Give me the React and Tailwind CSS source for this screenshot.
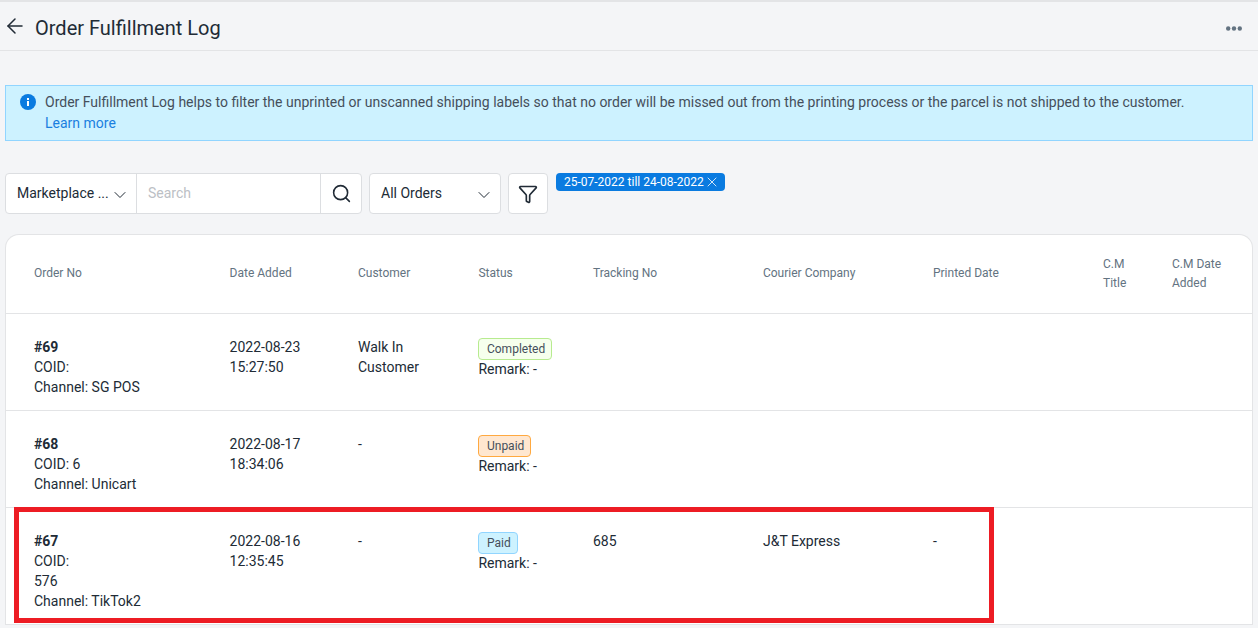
import { ArrowLeft, ChevronDown, Filter, Search, X } from "lucide-react";

const columns = "grid grid-cols-[223.6px_128.4px_120.4px_114.6px_170px_170px_170px_69px_1fr]";

const badgeStyles = {
  Completed: "border-[#b7eb8f] bg-[#f6ffed]",
  Unpaid: "border-[#ffa940] bg-[#ffe7d0]",
  Paid: "border-[#91d5ff] bg-[#cdf2ff]",
};

const orders = [
  {
    id: "#69",
    coid: ["COID:"],
    channel: "Channel: SG POS",
    date: "2022-08-23",
    time: "15:27:50",
    customer: ["Walk In", "Customer"],
    status: "Completed",
    height: "h-[97px]",
  },
  {
    id: "#68",
    coid: ["COID: 6"],
    channel: "Channel: Unicart",
    date: "2022-08-17",
    time: "18:34:06",
    customer: ["-"],
    status: "Unpaid",
    height: "h-[97px]",
  },
  {
    id: "#67",
    coid: ["COID:", "576"],
    channel: "Channel: TikTok2",
    date: "2022-08-16",
    time: "12:35:45",
    customer: ["-"],
    status: "Paid",
    tracking: "685",
    courier: "J&T Express",
    printed: "-",
    height: "h-[117px]",
  },
];

const InfoIcon = () => (
  <svg viewBox="0 0 16 16" className="mt-[2px] h-4 w-4 shrink-0" aria-hidden="true">
    <circle cx="8" cy="8" r="8" fill="#0a7be0" />
    <rect x="7" y="7" width="2" height="5" fill="#fff" />
    <rect x="7" y="4" width="2" height="2" fill="#fff" />
  </svg>
);

const DotsIcon = () => (
  <svg viewBox="0 0 16 5" className="ml-auto h-[5px] w-4" aria-hidden="true">
    <circle cx="2.2" cy="2.5" r="2.2" fill="#637381" />
    <circle cx="8" cy="2.5" r="2.2" fill="#637381" />
    <circle cx="13.8" cy="2.5" r="2.2" fill="#637381" />
  </svg>
);

const App = () => {
  return (
    <div className="relative h-[628px] w-[1258px] overflow-hidden bg-[#f4f5f7] font-['Roboto',sans-serif] text-sm text-[#212b36]">
      <header className="flex h-[51px] items-center border-y border-t-2 border-[#e3e4e6] pt-1 pr-4 pl-[3px]">
        <ArrowLeft className="h-6 w-6 -translate-y-[2px]" strokeWidth={1.5} />
        <h1 className="ml-2 text-xl text-[#212b36]">Order Fulfillment Log</h1>
        <DotsIcon />
      </header>

      <div className="mx-[5px] mt-[34px] flex h-[56px] gap-[9px] border border-[#91d5ff] bg-[#cdf2ff] pt-[6px] pl-[14px] leading-[21px]">
        <InfoIcon />
        <div className="text-[#454f5b]">
          <p>
            Order Fulfillment Log helps to filter the unprinted or unscanned shipping labels so
            that no order will be missed out from the printing process or the parcel is not shipped
            to the customer.
          </p>
          <p className="text-[#1a7fe0]">Learn more</p>
        </div>
      </div>

      <div className="mt-8 flex h-[41px] items-start pl-[5px]">
        <div className="flex h-[41px] w-[357px] overflow-hidden rounded border border-[#dcdee1] bg-white">
          <div className="flex w-[131px] items-center justify-between border-r border-[#dcdee1] pr-[6px] pb-px pl-[11px]">
            <span>Marketplace ...</span>
            <ChevronDown className="h-5 w-5 translate-y-[2px]" strokeWidth={1.2} />
          </div>
          <div className="flex flex-1 items-center border-r border-[#dcdee1] pb-px pl-[11px] text-[#bcc0c5]">
            Search
          </div>
          <div className="flex w-[40px] items-center justify-center">
            <Search className="h-[21px] w-[21px]" strokeWidth={1.8} />
          </div>
        </div>
        <div className="ml-[7px] flex h-[41px] w-[132px] items-center justify-between rounded border border-[#dcdee1] bg-white pr-[6px] pb-px pl-[11px]">
          <span>All Orders</span>
          <ChevronDown className="h-5 w-5 translate-y-[2px]" strokeWidth={1.2} />
        </div>
        <div className="ml-[7px] flex h-[41px] w-[40px] items-center justify-center rounded border border-[#dcdee1] bg-white">
          <Filter className="h-5 w-5" strokeWidth={2} />
        </div>
        <div className="ml-2 flex h-[18px] w-[169px] items-center rounded bg-[#0a7be0] pl-2 text-xs text-white">
          <span>25-07-2022 till 24-08-2022</span>
          <X className="h-4 w-4" strokeWidth={1.2} />
        </div>
      </div>

      <div className="mx-[5px] mt-5 rounded-t-[14px] border border-b-0 border-[#e3e4e6] bg-white">
        <div className={`${columns} h-[79px] items-center border-b border-[#e3e4e6] pb-px text-xs leading-[19px] text-[#637381]`}>
          <div className="pl-7">Order No</div>
          <div>Date Added</div>
          <div>Customer</div>
          <div>Status</div>
          <div>Tracking No</div>
          <div>Courier Company</div>
          <div>Printed Date</div>
          <div className="pt-px">
            C.M
            <br />
            Title
          </div>
          <div className="pt-px">
            C.M Date
            <br />
            Added
          </div>
        </div>

        {orders.map((order) => (
          <div
            key={order.id}
            className={`${columns} ${order.height} border-b border-[#e3e4e6] pt-[23px] leading-5`}
          >
            <div className="pl-7">
              <div className="font-bold">{order.id}</div>
              {order.coid.map((line) => (
                <div key={line}>{line}</div>
              ))}
              <div>{order.channel}</div>
            </div>
            <div>
              <div>{order.date}</div>
              <div>{order.time}</div>
            </div>
            <div>
              {order.customer.map((line) => (
                <div key={line}>{line}</div>
              ))}
            </div>
            <div>
              <div
                className={`mt-px -mb-px flex h-[22px] w-fit items-center rounded border pr-[6px] pl-[7.6px] text-xs text-[#454f5b] ${badgeStyles[order.status]}`}
              >
                {order.status}
              </div>
              <div>Remark: -</div>
            </div>
            <div>{order.tracking}</div>
            <div>{order.courier}</div>
            <div>{order.printed}</div>
          </div>
        ))}
      </div>

      {/* annotation box drawn over the last row */}
      <div className="pointer-events-none absolute top-[507px] left-[14px] h-[116px] w-[980px] border-[5px] border-[#ed1c24]" />
    </div>
  );
};

export default App;
